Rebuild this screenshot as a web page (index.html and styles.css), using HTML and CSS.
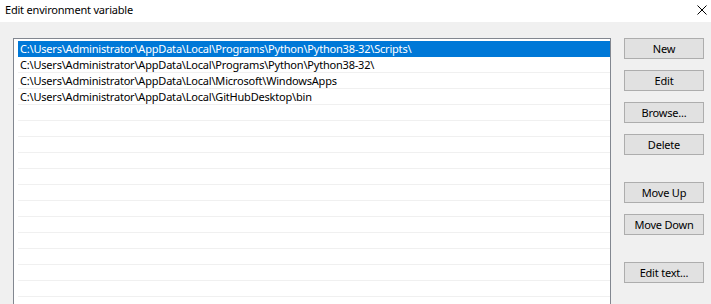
FILE: index.html
```html
<!DOCTYPE html>
<html lang="en">
<head>
    <meta charset="UTF-8">
    <title>Edit environment variable</title>
    <link rel="stylesheet" href="styles.css">
</head>
<body>
    <div class="window">
        <div class="titlebar">
            <span class="title">Edit environment variable</span>
            <span class="close">
                <svg width="10" height="10" viewBox="0 0 10 10">
                    <path d="M0.5 0.5 L9.5 9.5 M9.5 0.5 L0.5 9.5" stroke="#000" stroke-width="1" fill="none"/>
                </svg>
            </span>
        </div>
        <div class="content">
            <div class="listbox">
                <ul class="paths">
                    <li class="selected">C:\Users\Administrator\AppData\Local\Programs\Python\Python38-32\Scripts\</li>
                    <li>C:\Users\Administrator\AppData\Local\Programs\Python\Python38-32\</li>
                    <li>C:\Users\Administrator\AppData\Local\Microsoft\WindowsApps</li>
                    <li>C:\Users\Administrator\AppData\Local\GitHubDesktop\bin</li>
                    <li></li>
                    <li></li>
                    <li></li>
                    <li></li>
                    <li></li>
                    <li></li>
                    <li></li>
                    <li></li>
                    <li></li>
                    <li></li>
                    <li></li>
                    <li></li>
                    <li></li>
                </ul>
            </div>
            <div class="buttons">
                <button class="btn">New</button>
                <button class="btn">Edit</button>
                <button class="btn">Browse...</button>
                <button class="btn">Delete</button>
                <button class="btn spaced">Move Up</button>
                <button class="btn">Move Down</button>
                <button class="btn spaced">Edit text...</button>
            </div>
        </div>
    </div>
</body>
</html>
```

FILE: styles.css
```css
body {
    margin: 0;
    background-color: #f0f0f0;
    font-family: 'Noto Sans', 'Liberation Sans', sans-serif;
    font-size: 11px;
    letter-spacing: -0.2px;
    color: #000;
    overflow: hidden;
}
.window {
    width: 711px;
    height: 304px;
    overflow: hidden;
}
.titlebar {
    height: 22px;
    background-color: #fff;
    display: flex;
    align-items: center;
    justify-content: space-between;
    padding: 0 4px 0 5px;
}
.title {
    line-height: 16px;
    margin-top: -3px;
}
.close {
    display: flex;
    margin-top: -3px;
}
.content {
    display: flex;
    gap: 13px;
    padding: 16px 7px 0 13px;
}
.listbox {
    width: 596px;
    height: 265px;
    background-color: #fff;
    border: 1px solid #828790;
    border-bottom: none;
    overflow: hidden;
}
.paths {
    list-style: none;
    margin: 0;
    padding: 2px 0 0 2px;
}
.paths li {
    height: 15px;
    line-height: 15px;
    border-bottom: 1px solid #f0f0f0;
    padding-left: 2px;
    margin-left: 2px;
    white-space: nowrap;
}
.paths li.selected {
    background-color: #0078d7;
    border-bottom-color: #0078d7;
    color: #fff;
}
.buttons {
    width: 80px;
    display: flex;
    flex-direction: column;
    gap: 11px;
}
.btn {
    height: 21px;
    width: 80px;
    margin: 0;
    padding: 0;
    background-color: #e1e1e1;
    border: 1px solid #adadad;
    font-family: inherit;
    font-size: 11px;
    letter-spacing: -0.2px;
    color: #000;
}
.spaced {
    margin-top: 16px;
}
```
